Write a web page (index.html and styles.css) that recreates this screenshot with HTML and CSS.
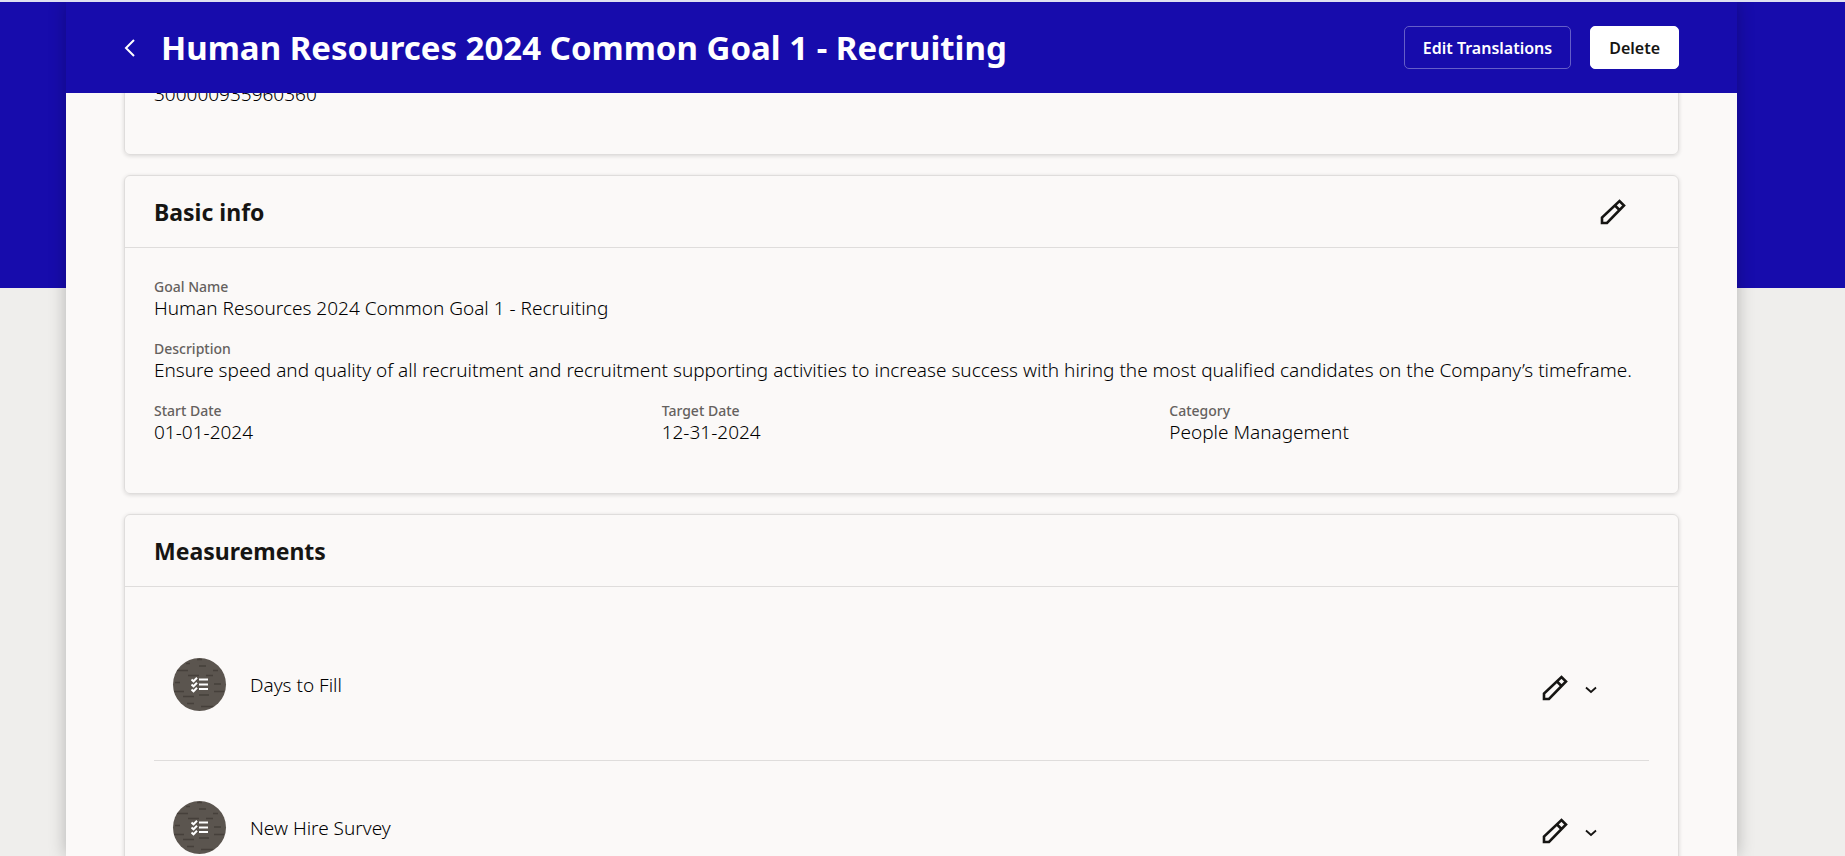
FILE: index.html
```
<!DOCTYPE html>
<html lang="en">
<head>
    <meta charset="utf-8">
    <title>Human Resources 2024 Common Goal 1 - Recruiting</title>
    <link rel="stylesheet" href="styles.css">
</head>
<body>
    <svg class="sprite" aria-hidden="true">
        <symbol id="icon-pencil" viewBox="0 0 26 26">
            <path d="M2 24V18.500L19.500 2L24 6.500L7 24ZM15 6.500L19.500 11" fill="none" stroke="currentColor" stroke-width="2.600"/>
        </symbol>
        <symbol id="icon-chevron" viewBox="0 0 12 8">
            <path d="M1 1.500L6 6L11 1.500" fill="none" stroke="currentColor" stroke-width="1.800"/>
        </symbol>
        <symbol id="icon-goal" viewBox="0 0 53 53">
            <g fill="none" stroke="#46403b" stroke-width="1.300">
                <path d="M24 1.500H29M13 5.500H17M26 8H33M3 12.500H15M40 12.500H45M15 17.500H26M33 17.500H40M2 24.500H7M41 26H48"/>
                <path d="M1 33.500H11M41 33.500H51M26 37H36M10 38.500H21M14 45.500H21M28 48.500H40"/>
            </g>
            <g fill="none" stroke="#fff" stroke-width="2">
                <path d="M26 21.500H35M26 26.500H35M26 31H35"/>
                <path d="M18.500 21.500L20.500 23.300L24 19.800M18.500 26.500L20.500 28.300L24 24.800M18.500 31.500L20.500 33.300L24 29.800"/>
            </g>
        </symbol>
    </svg>
    <div class="sheet">
        <header class="page-header">
            <a class="back" href="#" aria-label="Back">
                <svg width="12" height="20" viewBox="0 0 12 20"><path d="M10 2L2 10L10 18" fill="none" stroke="currentColor" stroke-width="2"/></svg>
            </a>
            <h1>Human Resources 2024 Common Goal 1 - Recruiting</h1>
            <button type="button" class="button">Edit Translations</button>
            <button type="button" class="button primary">Delete</button>
        </header>
        <main class="cards">
            <section class="card card-id">
                <p class="value">300000935960360</p>
            </section>
            <section class="card">
                <div class="card-header">
                    <h2>Basic info</h2>
                    <button type="button" class="icon-button" aria-label="Edit basic info"><svg class="pencil"><use href="#icon-pencil"/></svg></button>
                </div>
                <dl class="fields">
                    <div class="field wide">
                        <dt>Goal Name</dt>
                        <dd class="value">Human Resources 2024 Common Goal 1 - Recruiting</dd>
                    </div>
                    <div class="field wide">
                        <dt>Description</dt>
                        <dd class="value">Ensure speed and quality of all recruitment and recruitment supporting activities to increase success with hiring the most qualified candidates on the Company’s timeframe.</dd>
                    </div>
                    <div class="field">
                        <dt>Start Date</dt>
                        <dd class="value">01-01-2024</dd>
                    </div>
                    <div class="field">
                        <dt>Target Date</dt>
                        <dd class="value">12-31-2024</dd>
                    </div>
                    <div class="field">
                        <dt>Category</dt>
                        <dd class="value">People Management</dd>
                    </div>
                </dl>
            </section>
            <section class="card">
                <div class="card-header">
                    <h2>Measurements</h2>
                </div>
                <ul class="measurements">
                    <li>
                        <svg class="avatar"><use href="#icon-goal"/></svg>
                        <span class="value">Days to Fill</span>
                        <div class="actions">
                            <button type="button" class="icon-button" aria-label="Edit Days to Fill"><svg class="pencil"><use href="#icon-pencil"/></svg></button>
                            <button type="button" class="icon-button" aria-label="Expand Days to Fill"><svg class="chevron"><use href="#icon-chevron"/></svg></button>
                        </div>
                    </li>
                    <li>
                        <svg class="avatar"><use href="#icon-goal"/></svg>
                        <span class="value">New Hire Survey</span>
                        <div class="actions">
                            <button type="button" class="icon-button" aria-label="Edit New Hire Survey"><svg class="pencil"><use href="#icon-pencil"/></svg></button>
                            <button type="button" class="icon-button" aria-label="Expand New Hire Survey"><svg class="chevron"><use href="#icon-chevron"/></svg></button>
                        </div>
                    </li>
                </ul>
            </section>
        </main>
    </div>
</body>
</html>
```
FILE: styles.css
```
* {
    box-sizing: border-box;
}

html {
    height: 100%;
    overflow: hidden;
}

body {
    height: 100%;
    margin: 0;
    padding: 0 108px 0 66px;
    overflow: hidden;
    border-top: 2px solid #dfe1f1;
    background: linear-gradient(#170cac 288px, #efeeec 288px);
    font-family: "Noto Sans", "Open Sans", sans-serif;
    color: #161513;
}

h1, h2, p, dl, dd, ul {
    margin: 0;
    padding: 0;
}

.sprite {
    display: none;
}

.sheet {
    height: 100%;
    overflow: hidden;
    background: #fbf9f8;
    box-shadow: 0 0 16px rgba(0, 0, 0, 0.25);
}

.page-header {
    display: flex;
    align-items: center;
    position: relative;
    z-index: 1;
    height: 91px;
    padding: 0 58px;
    background: #170cac;
    color: #fff;
}

.page-header h1 {
    flex: 1;
    font-size: 33px;
    line-height: 44px;
    font-weight: 700;
    white-space: nowrap;
}

.back {
    display: flex;
    width: 37px;
    color: #fff;
}

.button {
    height: 43px;
    padding: 0 18px;
    border: 1px solid #655ec8;
    border-radius: 5px;
    background: transparent;
    color: #fff;
    font-family: inherit;
    font-size: 16px;
    font-weight: 600;
    cursor: pointer;
}

.button.primary {
    margin-left: 19px;
    border-color: #fff;
    background: #fff;
    color: #161513;
}

.cards {
    display: flex;
    flex-direction: column;
    gap: 20px;
    margin-top: -20px;
    padding: 0 58px;
}

.card {
    border: 1px solid #dfdddc;
    border-radius: 6px;
    box-shadow: 0 1px 4px rgba(0, 0, 0, 0.14);
}

.card-id {
    padding: 8px 29px 48px;
}

.card-header {
    display: flex;
    align-items: center;
    justify-content: space-between;
    height: 72px;
    padding: 0 52px 0 29px;
    border-bottom: 1px solid #dfdddc;
}

h2 {
    font-size: 23px;
    line-height: 32px;
    font-weight: 700;
}

.value {
    font-size: 19px;
    line-height: 24px;
    font-weight: 300;
    color: #000;
}

.fields {
    display: grid;
    grid-template-columns: repeat(3, 1fr);
    gap: 20px 28px;
    padding: 30px 29px 49px;
}

.wide {
    grid-column: 1 / -1;
}

dt {
    font-size: 14px;
    line-height: 18px;
    font-weight: 500;
    color: #65615e;
}

.icon-button {
    display: flex;
    padding: 0;
    border: 0;
    background: none;
    color: inherit;
    cursor: pointer;
}

.pencil {
    width: 26px;
    height: 26px;
}

.chevron {
    width: 12px;
    height: 8px;
    margin-top: 4px;
}

.measurements {
    padding: 31px 29px;
    list-style: none;
}

.measurements li {
    display: flex;
    align-items: center;
    gap: 24px;
    padding: 40px 52px 49px 19px;
    border-bottom: 1px solid #dfdddc;
}

.avatar {
    width: 53px;
    height: 53px;
    border-radius: 50%;
    background: #5b554f;
}

.actions {
    display: flex;
    align-items: center;
    gap: 17px;
    margin-left: auto;
    padding-top: 6px;
}
```
